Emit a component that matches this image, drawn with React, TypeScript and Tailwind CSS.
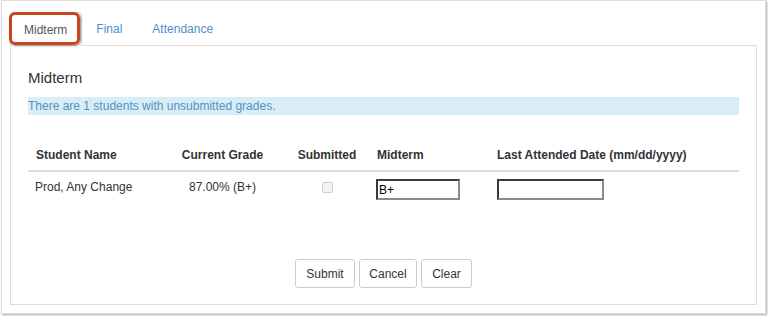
import React from "react";

const font = { fontFamily: '"Liberation Sans", Arial, sans-serif' };

export default function App() {
  return (
    <div className="w-[768px] h-[317px] bg-white pl-px" style={font}>
      <div className="w-[765px] h-[314px] border border-[#dedede] bg-white shadow-[1px_1px_2px_rgba(0,0,0,0.35)] px-[8px] pt-[11px] pb-[8px]">
        {/* tabs */}
        <div className="relative flex h-[34px] border-b border-[#ddd] text-[12px] leading-[17px]">
          <div className="-mb-px flex h-[34px] items-center rounded-t-[4px] border border-b-0 border-[#ddd] bg-white pl-[13px] pr-[14px] pt-[2px] text-[#555]">
            Midterm
          </div>
          <div className="flex items-center pl-[14px] pr-[15px] pt-[2px] text-[#4d8fcc]">Final</div>
          <div className="flex items-center pl-[15px] pr-[15px] pt-[2px] text-[#4d8fcc]">Attendance</div>
          <div className="absolute left-[-1px] top-0 h-[33px] w-[71px] rounded-[6px] border-[3px] border-[#c8461f] shadow-[1px_1px_2px_rgba(0,0,0,0.45)]" />
        </div>

        {/* panel */}
        <div className="border-x border-b border-[#ddd] px-[17px] pt-[22px] pb-[16px] text-[#333]">
          <h2 className="text-[15px] leading-[20px] font-normal text-[#333]">Midterm</h2>
          <div className="mt-[9px] h-[18px] bg-[#d9edf7] text-[12px] leading-[18px] text-[#5293c0]">
            There are 1 students with unsubmitted grades.
          </div>

          <div className="mt-[24px] grid grid-cols-[132px_125px_84px_120px_1fr] text-[12px] leading-[17px]">
            <div className="border-b-2 border-[#ddd] pl-[8px] pt-[8px] pb-[6px] font-bold">Student Name</div>
            <div className="border-b-2 border-[#ddd] pt-[8px] pb-[6px] text-center font-bold">Current Grade</div>
            <div className="border-b-2 border-[#ddd] pt-[8px] pb-[6px] text-center font-bold">Submitted</div>
            <div className="border-b-2 border-[#ddd] pl-[8px] pt-[8px] pb-[6px] font-bold">Midterm</div>
            <div className="border-b-2 border-[#ddd] pl-[8px] pt-[8px] pb-[6px] font-bold">Last Attended Date (mm/dd/yyyy)</div>

            <div className="pl-[7px] pt-[7px] pb-[8px]">Prod, Any Change</div>
            <div className="pt-[7px] pb-[8px] text-center">87.00% (B+)</div>
            <div className="flex justify-center pt-[10px] pl-[1px]">
              <div className="h-[11px] w-[11px] rounded-[2px] border border-[#cfcfcf] bg-[#f3f3f3]" />
            </div>
            <div className="pl-[7px] pt-[7px] pb-[8px]">
              <input
                defaultValue="B+"
                className="h-[21px] w-[84px] border-2 border-t-[#3a3a3a] border-l-[#3a3a3a] border-b-[#8a8a8a] border-r-[#8a8a8a] bg-white px-[1px] text-[12px] text-black outline-none"
                style={font}
              />
            </div>
            <div className="pl-[8px] pt-[7px] pb-[8px]">
              <input
                className="h-[21px] w-[107px] border-2 border-t-[#3a3a3a] border-l-[#3a3a3a] border-b-[#8a8a8a] border-r-[#8a8a8a] bg-white px-[1px] text-[12px] text-black outline-none"
                style={font}
              />
            </div>
          </div>

          <div className="mt-[51px] flex justify-center gap-[4px] text-[12px] text-[#333]">
            <button className="h-[29px] w-[60px] rounded-[3px] border border-[#ccc] bg-white">Submit</button>
            <button className="h-[29px] w-[58px] rounded-[3px] border border-[#ccc] bg-white">Cancel</button>
            <button className="h-[29px] w-[51px] rounded-[3px] border border-[#ccc] bg-white">Clear</button>
          </div>
        </div>
      </div>
    </div>
  );
}
